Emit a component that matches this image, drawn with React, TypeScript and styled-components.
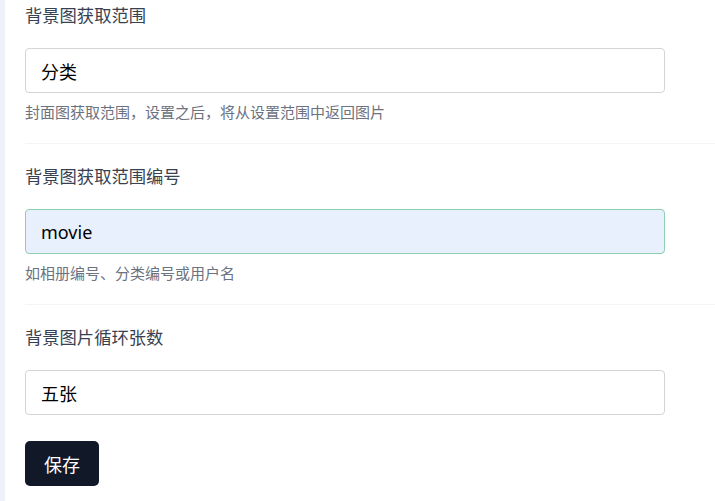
import React from "react";
import styled, { createGlobalStyle } from "styled-components";

const GlobalStyle = createGlobalStyle`
  html, body {
    margin: 0;
    padding: 0;
    background: #ffffff;
    overflow: hidden;
  }
  body {
    font-family: "Noto Sans", "Noto Sans CJK SC", sans-serif;
  }
`;

const Page = styled.div`
  display: flex;
  height: 501px;
  overflow: hidden;
`;

const SideEdge = styled.div`
  width: 5px;
  flex-shrink: 0;
  background: #eef2f8;
`;

const Content = styled.div`
  flex: 1;
  padding-left: 20px;
`;

const Form = styled.form`
  margin-top: -17px;
  display: flex;
  flex-direction: column;
`;

const Section = styled.div<{ $last?: boolean }>`
  padding: 21px 0 ${(p) => (p.$last ? "0" : "20px")};
  border-bottom: ${(p) => (p.$last ? "none" : "1px solid #f3f4f6")};
  display: flex;
  flex-direction: column;
`;

const Label = styled.label`
  font-size: 17.3px;
  line-height: 24px;
  color: #374151;
  margin-bottom: 20px;
`;

const Input = styled.input<{ $filled?: boolean }>`
  box-sizing: border-box;
  width: 640px;
  height: 45px;
  padding: 0 15px;
  font-family: "Noto Sans", "Noto Sans CJK SC", sans-serif;
  font-size: 18px;
  color: #000000;
  background: ${(p) => (p.$filled ? "#e8f0fe" : "#ffffff")};
  border: 1px solid ${(p) => (p.$filled ? "#8dcfae" : "#d4d4d8")};
  border-radius: 4px;
  outline: none;
`;

const Hint = styled.p`
  margin: 8px 0 0;
  font-size: 15px;
  line-height: 22px;
  color: #6b7280;
`;

const SaveButton = styled.button`
  align-self: flex-start;
  margin-top: 26px;
  height: 45px;
  padding: 0 19px;
  border: none;
  border-radius: 5px;
  background: #111827;
  color: #ffffff;
  font-family: "Noto Sans", "Noto Sans CJK SC", sans-serif;
  font-size: 18px;
  cursor: pointer;
`;

const fields = [
  {
    label: "背景图获取范围",
    value: "分类",
    hint: "封面图获取范围，设置之后，将从设置范围中返回图片",
  },
  {
    label: "背景图获取范围编号",
    value: "movie",
    hint: "如相册编号、分类编号或用户名",
    filled: true,
  },
  {
    label: "背景图片循环张数",
    value: "五张",
  },
];

const App = () => {
  return (
    <>
      <GlobalStyle />
      <Page>
        <SideEdge />
        <Content>
          <Form onSubmit={(e) => e.preventDefault()}>
            {fields.map((field, index) => (
              <Section key={field.label} $last={index === fields.length - 1}>
                <Label>{field.label}</Label>
                <Input defaultValue={field.value} $filled={field.filled} />
                {field.hint && <Hint>{field.hint}</Hint>}
              </Section>
            ))}
            <SaveButton type="submit">保存</SaveButton>
          </Form>
        </Content>
      </Page>
    </>
  );
};

export default App;
